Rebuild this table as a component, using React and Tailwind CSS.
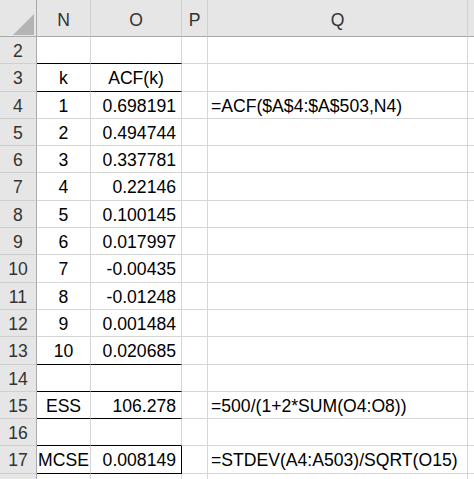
const cols = ['N', 'O', 'P', 'Q'];

const rows = [
  { n: 2 },
  { n: 3, N: 'k', O: 'ACF(k)', oCenter: true },
  { n: 4, N: '1', O: '0.698191', Q: '=ACF($A$4:$A$503,N4)' },
  { n: 5, N: '2', O: '0.494744' },
  { n: 6, N: '3', O: '0.337781' },
  { n: 7, N: '4', O: '0.22146' },
  { n: 8, N: '5', O: '0.100145' },
  { n: 9, N: '6', O: '0.017997' },
  { n: 10, N: '7', O: '-0.00435' },
  { n: 11, N: '8', O: '-0.01248' },
  { n: 12, N: '9', O: '0.001484' },
  { n: 13, N: '10', O: '0.020685' },
  { n: 14 },
  { n: 15, N: 'ESS', O: '106.278', Q: '=500/(1+2*SUM(O4:O8))' },
  { n: 16 },
  { n: 17, N: 'MCSE', O: '0.008149', Q: '=STDEV(A4:A503)/SQRT(O15)', boxed: true },
  { n: 18, hideNum: true },
];

// rows whose N:O cells carry a black bottom border
const ruled = [2, 3, 13, 14, 15, 16, 17];

const font = { fontFamily: '"Liberation Sans", Arial, sans-serif' };

export default function App() {
  return (
    <div className="w-[474px] h-[479px] overflow-hidden bg-white text-[17.6px] text-black" style={font}>
      <div className="grid grid-cols-[37px_54px_91px_26px_260px_1fr]">
        {/* header row */}
        <div className="relative h-[37px] bg-[#e6e6e6] border-r border-b border-[#a9a9a9]">
          <svg className="absolute left-[13px] top-[14px]" width="21" height="21" viewBox="0 0 21 21">
            <polygon points="21,0 21,21 0,21" fill="#b4b4b4" />
          </svg>
        </div>
        {cols.map(c => (
          <div key={c} className="h-[37px] bg-[#e6e6e6] border-r border-r-[#cfcfcf] border-b border-b-[#a9a9a9] flex items-center justify-center pt-[4px] text-[#333]">
            {c}
          </div>
        ))}
        <div className="h-[37px] bg-[#e6e6e6] border-b border-[#a9a9a9]" />

        {rows.map(r => {
          const black = ruled.includes(r.n);
          const cellB = black ? 'border-b-black' : 'border-b-[#d6d6d6]';
          return [
            <div key={`h${r.n}`} className="h-[27.3px] bg-[#e6e6e6] border-r border-r-[#a9a9a9] border-b border-b-[#cfcfcf] flex items-center justify-center pt-[2px] text-[#333]">
              {r.hideNum ? null : r.n}
            </div>,
            <div key={`n${r.n}`} className={`h-[27.3px] border-r border-r-[#d6d6d6] border-b ${cellB} flex items-center justify-center pt-[2px] whitespace-nowrap`}>
              {r.N}
            </div>,
            <div key={`o${r.n}`} className={`h-[27.3px] border-r ${r.boxed ? 'border-r-black' : 'border-r-[#d6d6d6]'} border-b ${cellB} flex items-center ${r.oCenter ? 'justify-center' : 'justify-end pr-[5px]'} pt-[2px] whitespace-nowrap`}>
              {r.O}
            </div>,
            <div key={`p${r.n}`} className="h-[27.3px] border-r border-b border-[#d6d6d6]" />,
            <div key={`q${r.n}`} className="h-[27.3px] border-r border-b border-[#d6d6d6] flex items-center pl-[3px] pt-[2px] whitespace-nowrap">
              {r.Q}
            </div>,
            <div key={`x${r.n}`} className="h-[27.3px] border-b border-[#d6d6d6]" />,
          ];
        })}
      </div>
    </div>
  );
}
